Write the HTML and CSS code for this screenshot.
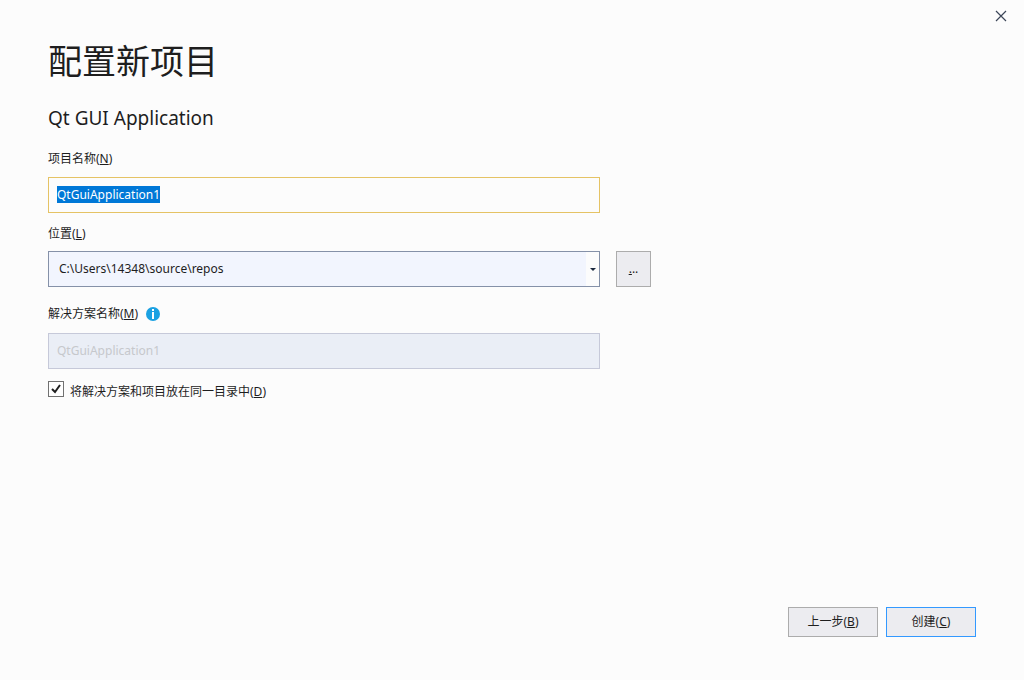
FILE: index.html
```
<!DOCTYPE html>
<html lang="zh">
<head>
    <meta charset="UTF-8">
    <meta name="viewport" content="width=device-width, initial-scale=1.0">
    <title>配置新项目</title>
    <link rel="stylesheet" href="styles.css">
</head>
<body>

    <div class="titlebar">
        <button type="button" class="close" aria-label="关闭">
            <svg width="12" height="12" viewBox="0 0 12 12"><path d="M1 1L11 11M11 1L1 11" stroke="#3c4658" stroke-width="1.2" fill="none"/></svg>
        </button>
    </div>

    <form class="dialog">
        <h1>配置新项目</h1>
        <h2>Qt GUI Application</h2>

        <label for="project-name">项目名称(<u>N</u>)</label>
        <input type="text" class="field" id="project-name" value="QtGuiApplication1" accesskey="n" spellcheck="false" autocomplete="off">

        <label class="label-location" for="location">位置(<u>L</u>)</label>
        <div class="location-row">
            <div class="combo">
                <select id="location" accesskey="l">
                    <option>C:\Users\14348\source\repos</option>
                </select>
                <span class="combo-arrow">
                    <svg width="6" height="3" viewBox="0 0 6 3"><path d="M0 0H6L3 3Z" fill="#1b293e"/></svg>
                </span>
            </div>
            <button type="button" class="button browse" aria-label="浏览"><u>.</u>..</button>
        </div>

        <div class="label-row">
            <label for="solution-name">解决方案名称(<u>M</u>)</label>
            <svg width="14" height="14" viewBox="0 0 14 14">
                <circle cx="7" cy="7" r="7" fill="#1ba1e2"/>
                <path d="M6 2H8V4H6ZM6 5H8V12H6Z" fill="#fff"/>
            </svg>
        </div>
        <input type="text" class="field" id="solution-name" value="QtGuiApplication1" disabled>

        <div class="check-row">
            <input type="checkbox" id="same-dir" accesskey="d" checked>
            <label for="same-dir">将解决方案和项目放在同一目录中(<u>D</u>)</label>
        </div>

        <div class="actions">
            <button type="button" class="button">上一步(<u>B</u>)</button>
            <button type="submit" class="button primary">创建(<u>C</u>)</button>
        </div>
    </form>

    <script>
        // 打开时选中项目名称
        var projectName = document.getElementById('project-name');
        projectName.focus();
        projectName.select();
    </script>

</body>
</html>
```
FILE: styles.css
```
* {
    margin: 0;
    padding: 0;
    box-sizing: border-box;
}

body {
    display: flex;
    flex-direction: column;
    min-height: 100vh;
    font-family: "Noto Sans", "Noto Sans CJK SC", sans-serif;
    font-size: 12px;
    line-height: 18px;
    color: #1e1e1e;
    background: #fcfcfc;
}

input, select, button {
    font: inherit;
    color: inherit;
    outline: none;
}

u {
    text-underline-offset: 1px;
}

.titlebar {
    display: flex;
    justify-content: flex-end;
    height: 32px;
}

.close {
    display: flex;
    align-items: center;
    justify-content: center;
    width: 46px;
    border: none;
    background: none;
}

.close:hover {
    background: #e5e5e5;
}

.dialog {
    flex: 1;
    display: flex;
    flex-direction: column;
    padding: 4px 48px 43px;
}

h1 {
    font-family: "Noto Sans CJK SC", sans-serif;
    font-size: 34px;
    font-weight: 400;
    line-height: 48px;
}

h2 {
    margin: 20px 0 18px;
    font-size: 19px;
    font-weight: 400;
    line-height: 28px;
}

.field, .combo {
    width: 100%;
    max-width: 552px;
    height: 36px;
}

.field {
    margin-top: 9px;
    padding: 0 8px 2px;
    border: 1px solid #cccedb;
    background: #fcfcfc;
}

.field:focus {
    border-color: #e5c365;
}

.field:disabled {
    border-color: #c6c9d9;
    background: #eaeef6;
    color: #c6c8cc;
}

.field::selection {
    background: #0078d7;
    color: #fff;
}

.label-location {
    margin-top: 12px;
}

.location-row {
    display: flex;
    gap: 16px;
    margin-top: 8px;
}

.combo {
    position: relative;
}

.combo select {
    width: 100%;
    height: 100%;
    padding: 0 24px 0 10px;
    border: 1px solid #8591a8;
    border-radius: 0;
    background: #f2f5fe;
    appearance: none;
}

.combo-arrow {
    position: absolute;
    top: 1px;
    right: 1px;
    bottom: 1px;
    display: flex;
    align-items: center;
    justify-content: center;
    width: 13px;
    background: #fcfcfc;
    pointer-events: none;
}

.button {
    width: 90px;
    height: 30px;
    border: 1px solid #acacac;
    background: #ececf0;
}

.primary {
    border-color: #3399ff;
}

.browse {
    width: 35px;
    height: 36px;
}

.label-row {
    display: flex;
    align-items: center;
    gap: 8px;
    margin-top: 18px;
}

.label-row + .field {
    margin-top: 10px;
}

.check-row {
    display: flex;
    align-items: flex-start;
    gap: 6px;
    margin-top: 12px;
}

.check-row label {
    padding-top: 2px;
}

.check-row input {
    width: 16px;
    height: 16px;
    border: 1px solid #717171;
    background: #fefefe;
    appearance: none;
}

.check-row input:checked {
    background: #fefefe url("data:image/svg+xml,%3Csvg xmlns='http://www.w3.org/2000/svg' viewBox='0 0 14 14'%3E%3Cpath d='M3 7L6 10L11 3' fill='none' stroke='%231e1e1e' stroke-width='2'/%3E%3C/svg%3E");
}

.actions {
    display: flex;
    justify-content: flex-end;
    gap: 8px;
    margin-top: auto;
}
```
